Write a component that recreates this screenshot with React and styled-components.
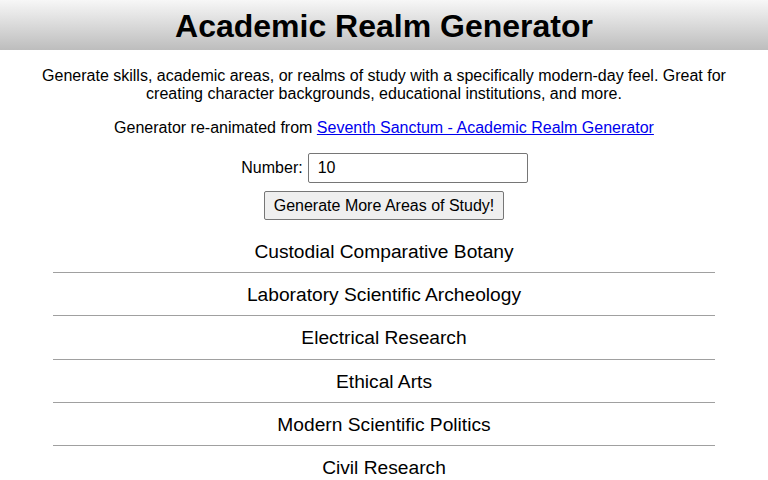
import React, { useState } from 'react';
import styled, { createGlobalStyle } from 'styled-components';

const GlobalStyle = createGlobalStyle`
  body {
    margin: 0;
    background: #ffffff;
    color: #000000;
    font-family: "Liberation Sans", Arial, sans-serif;
  }
`;

const areas = [
  'Custodial Comparative Botany',
  'Laboratory Scientific Archeology',
  'Electrical Research',
  'Ethical Arts',
  'Modern Scientific Politics',
  'Civil Research',
  'Applied Theoretical Linguistics',
  'Industrial Philosophy',
  'Digital Forensic Anthropology',
  'Urban Studies',
];

const App = () => {
  const [count, setCount] = useState('10');

  return (
    <Page>
      <GlobalStyle />
      <Header>
        <Title>Academic Realm Generator</Title>
      </Header>

      <Intro>
        Generate skills, academic areas, or realms of study with a specifically modern-day feel. Great for
        creating character backgrounds, educational institutions, and more.
      </Intro>

      <Credit>
        Generator re-animated from{' '}
        <CreditLink href="#">Seventh Sanctum - Academic Realm Generator</CreditLink>
      </Credit>

      <Form onSubmit={e => e.preventDefault()}>
        <FieldRow>
          <Label htmlFor="number">Number:</Label>
          <NumberInput id="number" value={count} onChange={e => setCount(e.target.value)} />
        </FieldRow>
        <GenerateButton type="submit">Generate More Areas of Study!</GenerateButton>
      </Form>

      <ResultList>
        {areas.map(area => (
          <ResultItem key={area}>{area}</ResultItem>
        ))}
      </ResultList>
    </Page>
  );
};

const Page = styled.div`
  min-height: 100vh;
`;

const Header = styled.header`
  height: 50px;
  display: flex;
  align-items: center;
  justify-content: center;
  background: linear-gradient(to bottom, #f7f7f7, #bdbdbd);
`;

const Title = styled.h1`
  margin: 0;
  padding-top: 1px;
  font-size: 32px;
  font-weight: bold;
  line-height: 1;
`;

const Intro = styled.p`
  margin: 17px auto 16px;
  padding: 0 40px;
  font-size: 16px;
  line-height: 18px;
  text-align: center;
`;

const Credit = styled.p`
  margin: 16px 0;
  font-size: 16px;
  line-height: 18px;
  text-align: center;
`;

const CreditLink = styled.a`
  color: #0000ee;
  text-decoration: underline;
`;

const Form = styled.form`
  display: flex;
  flex-direction: column;
  align-items: center;
  gap: 8px;
`;

const FieldRow = styled.div`
  display: flex;
  align-items: center;
  gap: 5px;
  margin-left: 1px;
`;

const Label = styled.label`
  font-size: 16px;
`;

const NumberInput = styled.input`
  box-sizing: border-box;
  width: 220px;
  height: 30px;
  padding: 0 9px;
  border: 1px solid #767676;
  border-radius: 2px;
  font-family: "Liberation Sans", Arial, sans-serif;
  font-size: 16px;
  color: #000;
`;

const GenerateButton = styled.button`
  box-sizing: border-box;
  height: 29px;
  padding: 0 9px;
  border: 1px solid #767676;
  border-radius: 2px;
  background: #efefef;
  font-family: "Liberation Sans", Arial, sans-serif;
  font-size: 16px;
  color: #000;
  cursor: pointer;
`;

const ResultList = styled.div`
  width: 662px;
  margin: 10px auto 0;
`;

const ResultItem = styled.div`
  padding: 11px 0 9px;
  border-bottom: 1px solid #a0a0a0;
  font-size: 19.2px;
  line-height: 22.2px;
  text-align: center;
`;

export default App;
